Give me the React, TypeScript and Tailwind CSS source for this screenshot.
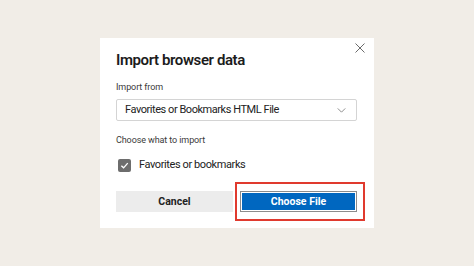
import React from 'react';

const App: React.FC = () => {
  return (
    <div className="w-[474px] h-[266px] bg-[#f1ede7] flex justify-center pt-[38px] font-['Roboto',sans-serif]">
      <div className="relative w-[274px] h-[190px] bg-white pt-[12px] pl-4 pr-[17px] pb-4 flex flex-col">
        <button className="absolute top-[5px] right-[9px] w-[10px] h-[10px] text-[#6a6a6a]">
          <svg viewBox="0 0 10 10" className="w-[10px] h-[10px]" fill="none" stroke="currentColor" strokeWidth="1">
            <path d="M0.5 0.5 L9.5 9.5 M9.5 0.5 L0.5 9.5" />
          </svg>
        </button>

        <h1 className="text-[15px] leading-[20px] font-semibold tracking-[-0.4px] text-[#1c1c1c]">Import browser data</h1>

        <p className="mt-[10px] text-[9px] leading-[14px] tracking-[-0.1px] text-[#3a3a3a]">Import from</p>
        <div className="mt-[5px] h-[22px] border border-[#d4d4d4] rounded-[2px] flex items-center justify-between pl-2 pr-[10px]">
          <span className="text-[11px] tracking-[-0.45px] text-[#222]">Favorites or Bookmarks HTML File</span>
          <svg viewBox="0 0 10 6" className="w-[9px] h-[5px] text-[#777]" fill="none" stroke="currentColor" strokeWidth="1">
            <path d="M0.5 0.5 L5 5 L9.5 0.5" />
          </svg>
        </div>

        <p className="mt-[12px] text-[9px] leading-[14px] tracking-[-0.1px] text-[#3a3a3a]">Choose what to import</p>
        <div className="mt-[10px] h-4 flex items-center pl-[2px] gap-[8px]">
          <span className="w-[13px] h-[13px] rounded-[2px] bg-[#6d6d6d] flex items-center justify-center">
            <svg viewBox="0 0 10 10" className="w-[9px] h-[9px]" fill="none" stroke="white" strokeWidth="1.5">
              <path d="M1.5 5.2 L4 7.6 L8.6 2.4" />
            </svg>
          </span>
          <span className="text-[11px] tracking-[-0.4px] text-[#222]">Favorites or bookmarks</span>
        </div>

        <div className="mt-auto grid grid-cols-2 gap-[7px]">
          <button className="h-[21px] bg-[#ececec] text-[10.5px] font-bold text-[#222]">Cancel</button>
          <div className="relative">
            <div className="h-[21px] border border-[#8c8c8c] p-px bg-white">
              <button className="w-full h-full bg-[#0067c0] text-[10.5px] font-bold text-white flex items-center justify-center">
                Choose File
              </button>
            </div>
            <div className="absolute -left-[5px] -right-[8px] -top-[9px] -bottom-[9px] border-2 border-[#e03a2e] pointer-events-none" />
          </div>
        </div>
      </div>
    </div>
  );
};

export default App;
